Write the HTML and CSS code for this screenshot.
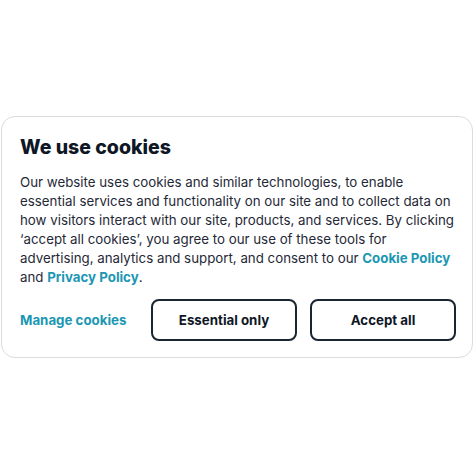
FILE: index.html
```html
<!DOCTYPE html>
<html lang="en">
<head>
    <meta charset="UTF-8">
    <meta name="viewport" content="width=device-width, initial-scale=1.0">
    <title>Cookies</title>
    <link rel="stylesheet" href="styles.css">
</head>
<body>
    <div class="page">
        <div class="cookie-banner">
            <h2>We use cookies</h2>
            <p>Our website uses cookies and similar technologies, to enable essential services and functionality on our site and to collect data on how visitors interact with our site, products, and services. By clicking &lsquo;accept all cookies&rsquo;, you agree to our use of these tools for advertising, analytics and support, and consent to our <a href="#">Cookie Policy</a> and <a href="#">Privacy Policy</a>.</p>
            <div class="actions">
                <a href="#" class="manage">Manage cookies</a>
                <button class="btn">Essential only</button>
                <button class="btn">Accept all</button>
            </div>
        </div>
    </div>
</body>
</html>
```

FILE: styles.css
```css
html, body {
    margin: 0;
    padding: 0;
    height: 100%;
    background-color: #fff;
    font-family: Inter, 'Noto Sans', sans-serif;
    color: #1b2433;
}

.page {
    height: 100%;
    display: flex;
    align-items: center;
    padding: 0 1px;
    box-sizing: border-box;
}

.cookie-banner {
    flex: 1;
    border: 1.5px solid #dcdcdc;
    border-radius: 14px;
    padding: 18px 10px 16px 18px;
    background-color: #fff;
}

.cookie-banner h2 {
    margin: 0 0 14px 0;
    font-size: 19.5px;
    font-weight: 800;
    color: #0f1726;
}

.cookie-banner p {
    margin: 0;
    font-size: 13.3px;
    line-height: 19px;
    color: #1f2937;
}

.cookie-banner a {
    color: #1b97b3;
    font-weight: 700;
    text-decoration: none;
}

.actions {
    display: flex;
    align-items: center;
    margin-top: 12px;
    margin-right: 6px;
    gap: 13px;
}

.actions .manage {
    flex: 0 0 118px;
    font-size: 13.3px;
}

.btn {
    flex: 1;
    height: 42px;
    background-color: #fff;
    border: 2px solid #1b2433;
    border-radius: 8px;
    font-family: inherit;
    font-size: 13.3px;
    font-weight: 700;
    color: #0f1726;
    cursor: pointer;
}
```
